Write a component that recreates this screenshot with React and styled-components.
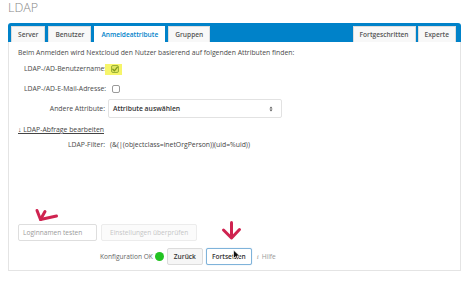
import React from "react"
import styled, { createGlobalStyle } from "styled-components"

const GlobalStyle = createGlobalStyle`
  html, body {
    margin: 0;
    padding: 0;
    background: #fff;
  }
  body {
    font-family: "Open Sans", "Liberation Sans", sans-serif;
    color: #4a4a4a;
  }
`

const Page = styled.div`
  position: relative;
  width: 474px;
  height: 285px;
  padding: 0 13px 0 8px;
  box-sizing: border-box;
`

const Title = styled.h2`
  margin: 0;
  height: 16px;
  line-height: 16px;
  font-size: 12.5px;
  font-weight: 300;
  color: #888;
`

const TabBar = styled.div`
  margin-top: 7px;
  height: 19px;
  box-sizing: border-box;
  padding: 3px 5px 0 3px;
  background: #0082c9;
  border-radius: 3px 3px 0 0;
  display: flex;
  justify-content: space-between;
  align-items: flex-end;
`

const TabGroup = styled.div`
  display: flex;
  gap: ${p => p.$gap}px;
  height: 100%;
`

const Tab = styled.div`
  height: 100%;
  box-sizing: border-box;
  padding: 0 6px;
  display: flex;
  align-items: center;
  font-size: 6.6px;
  font-weight: 600;
  color: ${p => (p.$active ? "#0082c9" : "#555")};
  background: ${p => (p.$active ? "#fff" : "#f8f8f8")};
  border: 1px solid ${p => (p.$active ? "#fff" : "#ddd")};
  border-bottom: none;
`

const Panel = styled.div`
  border: 1px solid #e4e4e4;
  border-top: none;
  padding: 6px 9px 5px 9px;
  height: 229px;
  box-sizing: border-box;
  display: flex;
  flex-direction: column;
  font-size: 6.85px;
  line-height: 10px;
`

const Intro = styled.p`
  margin: 0;
  white-space: nowrap;
`

const FieldRow = styled.div`
  display: flex;
  align-items: center;
  height: ${p => p.$h || 12}px;
  margin-top: ${p => p.$mt}px;
  padding-left: ${p => p.$pl || 0}px;
`

const Label = styled.label`
  flex-shrink: 0;
  white-space: nowrap;
  margin-right: ${p => p.$gap}px;
  ${p => p.$col && `
    width: 87px;
    text-align: right;
  `}
`

const Highlight = styled.span`
  display: flex;
  align-items: center;
  background: #f6f56a;
  height: 11px;
  padding: 0 3px 0 6px;
  margin-left: -1px;
`

const Box = styled.span`
  display: inline-block;
  width: 8px;
  height: 8px;
  box-sizing: border-box;
  border: 1px solid ${p => (p.$checked ? "#9cb238" : "#9a9a9a")};
  border-radius: 2px;
  background: ${p => (p.$checked ? "#dfe562" : "#fff")};
  position: relative;
`

const Select = styled.div`
  width: 174px;
  height: 19px;
  box-sizing: border-box;
  border: 1px solid #e2e2e2;
  border-radius: 2px;
  padding: 0 8px 0 4px;
  display: flex;
  align-items: center;
  justify-content: space-between;
  font-weight: 600;
  color: #333;
  font-size: 6.8px;
`

const EditLink = styled.a`
  display: block;
  margin-top: 7px;
  width: fit-content;
  color: #444;
  text-decoration: underline;
`

const FilterValue = styled.span`
  color: #444;
`

const Spacer = styled.div`
  flex: 1;
`

const ActionRow = styled.div`
  display: flex;
  align-items: center;
  gap: ${p => p.$gap}px;
  height: 17px;
  font-size: 6.6px;
  margin-top: ${p => p.$mt || 0}px;
  padding-left: ${p => p.$pl || 0}px;
`

const TextInput = styled.div`
  width: 79px;
  height: 17px;
  box-sizing: border-box;
  border: 1px solid #dedede;
  border-radius: 2px;
  padding-left: 4px;
  display: flex;
  align-items: center;
  color: #9a9a9a;
`

const Button = styled.div`
  height: 17px;
  box-sizing: border-box;
  padding: 0 ${p => p.$px || 7}px;
  border: 1px solid ${p => p.$primary ? "#7fb3da" : p.$disabled ? "#ececec" : "#dcdcdc"};
  border-radius: 2px;
  background: ${p => p.$primary ? "#fff" : p.$disabled ? "#fbfbfb" : "#f6f6f6"};
  color: ${p => (p.$disabled ? "#c6c6c6" : "#333")};
  font-weight: ${p => (p.$disabled ? 400 : 600)};
  display: flex;
  align-items: center;
  box-shadow: ${p => p.$primary ? "0 0 1px #9cc4e4" : "none"};
`

const Status = styled.span`
  display: flex;
  align-items: center;
  gap: 2px;
  color: #666;
`

const Dot = styled.span`
  width: 9px;
  height: 9px;
  border-radius: 50%;
  background: #22c322;
  display: inline-block;
`

const Help = styled.span`
  color: #999;
  margin-left: 2px;
  i {
    margin-right: 3px;
    font-family: "Liberation Serif", serif;
    font-size: 7px;
  }
`

const Overlay = styled.svg`
  position: absolute;
  left: 0;
  top: 0;
  pointer-events: none;
`

function CheckMark() {
  return (
    <svg width="8" height="8" viewBox="0 0 8 8" style={{ position: "absolute", left: -1, top: -1 }}>
      <path d="M1.8 4.2 L3.4 5.8 L6.4 2.2" fill="none" stroke="#7f9a1c" strokeWidth="1.3" strokeLinecap="round" strokeLinejoin="round" />
    </svg>
  )
}

function SelectArrows() {
  return (
    <svg width="4" height="6" viewBox="0 0 4 6">
      <path d="M2 0.5 L3.5 2.5 L0.5 2.5 Z M2 5.5 L3.5 3.5 L0.5 3.5 Z" fill="#555" />
    </svg>
  )
}

export default function App() {
  return (
    <Page>
      <GlobalStyle />
      <Title>LDAP</Title>
      <TabBar>
        <TabGroup $gap={3}>
          <Tab>Server</Tab>
          <Tab>Benutzer</Tab>
          <Tab $active>Anmeldeattribute</Tab>
          <Tab>Gruppen</Tab>
        </TabGroup>
        <TabGroup $gap={2}>
          <Tab>Fortgeschritten</Tab>
          <Tab>Experte</Tab>
        </TabGroup>
      </TabBar>
      <Panel>
        <Intro>Beim Anmelden wird Nextcloud den Nutzer basierend auf folgenden Attributen finden:</Intro>
        <FieldRow $mt={5} $pl={6}>
          <Label $gap={0}>LDAP-/AD-Benutzername:</Label>
          <Highlight>
            <Box $checked><CheckMark /></Box>
          </Highlight>
        </FieldRow>
        <FieldRow $mt={8} $pl={6}>
          <Label $gap={6}>LDAP-/AD-E-Mail-Adresse:</Label>
          <Box />
        </FieldRow>
        <FieldRow $mt={4} $h={19}>
          <Label $col $gap={3}>Andere Attribute:</Label>
          <Select>
            <span>Attribute auswählen</span>
            <SelectArrows />
          </Select>
        </FieldRow>
        <EditLink>↓ LDAP-Abfrage bearbeiten</EditLink>
        <FieldRow $mt={5} $h={10}>
          <Label $col $gap={5}>LDAP-Filter:</Label>
          <FilterValue>(&amp;(|(objectclass=inetOrgPerson))(uid=%uid))</FilterValue>
        </FieldRow>
        <Spacer />
        <ActionRow $gap={4}>
          <TextInput>Loginnamen testen</TextInput>
          <Button $disabled $px={8}>Einstellungen überprüfen</Button>
        </ActionRow>
        <ActionRow $gap={3} $mt={7} $pl={82}>
          <Status>Konfiguration OK <Dot /></Status>
          <Button $px={6}>Zurück</Button>
          <Button $primary $px={5}>Fortsetzen</Button>
          <Help><i>i</i>Hilfe</Help>
        </ActionRow>
      </Panel>
      <Overlay width="474" height="285" viewBox="0 0 474 285">
        <g fill="none" stroke="#cf2350" strokeWidth="3" strokeLinecap="round" strokeLinejoin="round">
          <path d="M37 210.5 L40.5 219.5 L56.5 216" />
          <path d="M40.5 219.5 L45 211.5" />
          <path d="M231.5 222.5 L231.5 237" />
          <path d="M223.5 230 L231.5 238 L239.5 229.5" />
        </g>
        <path d="M233.5 250 L233.5 258.5 L235.6 256.6 L237 259.6 L238.3 259 L237 256 L239.8 256 Z" fill="#111" stroke="#fff" strokeWidth="0.7" />
      </Overlay>
    </Page>
  )
}
